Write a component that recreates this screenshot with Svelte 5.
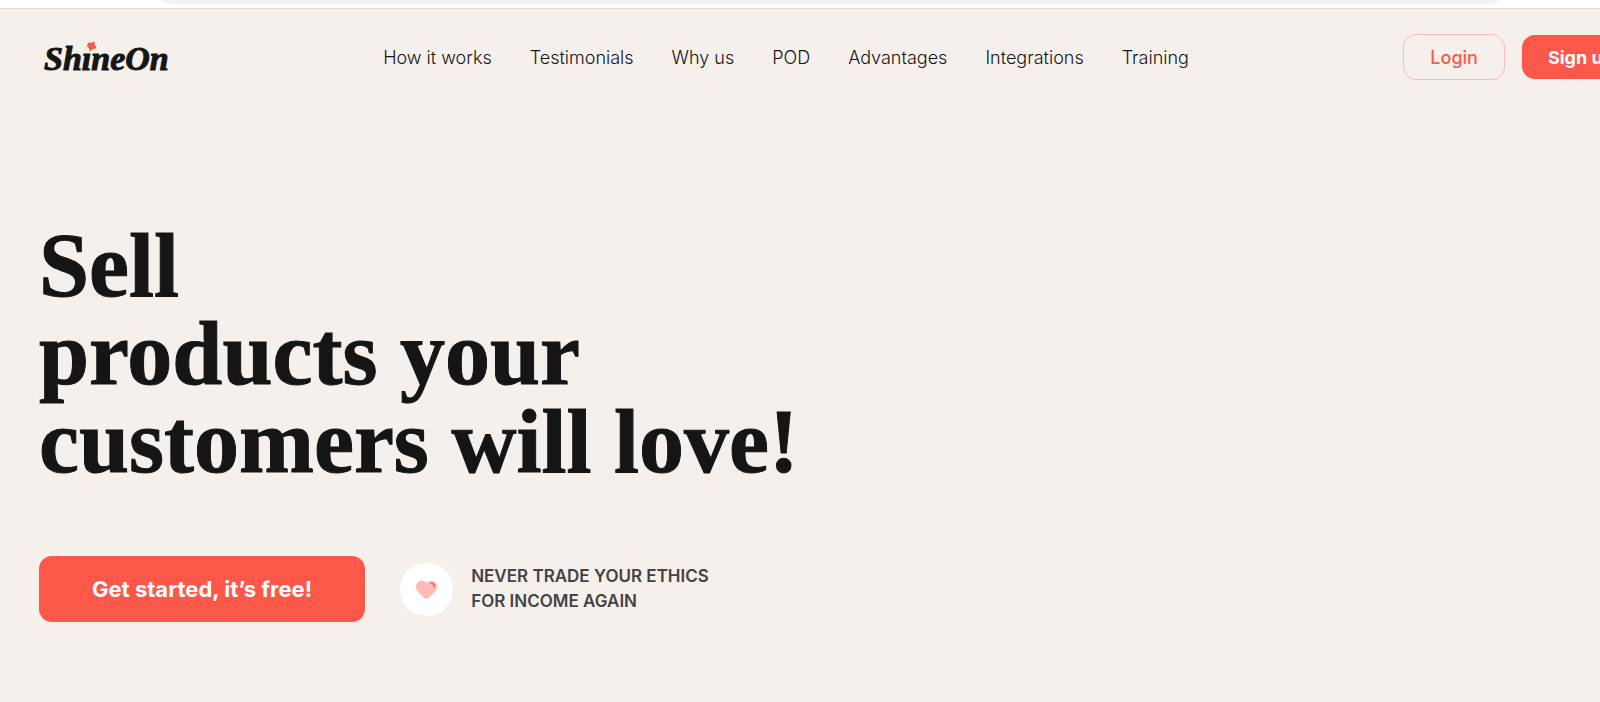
<script lang="ts">
	const links = [
		{ label: "How it works", href: "#how-it-works" },
		{ label: "Testimonials", href: "#testimonials" },
		{ label: "Why us", href: "#why-us" },
		{ label: "POD", href: "#pod" },
		{ label: "Advantages", href: "#advantages" },
		{ label: "Integrations", href: "#integrations" },
		{ label: "Training", href: "#training" },
	];
</script>

<div class="page">
	<div class="browser-edge">
		<div class="address-bar"></div>
	</div>

	<header class="header">
		<a class="logo" href="#home">
			<span>ShineOn</span>
			<svg class="spark" viewBox="0 0 12 12" aria-hidden="true">
				<ellipse cx="5" cy="7" rx="5" ry="4" fill="#f5f0ec" />
				<path d="M2.6 1.4 Q6 2.4 8.6 .2 Q8.4 3.6 11 6.8 Q7.4 6.8 4.2 9.8 Q4.6 6.4 1.4 4.6 Q3 3.4 2.6 1.4Z" fill="#fb584a" />
			</svg>
		</a>
		<nav class="nav">
			{#each links as link}
				<a href={link.href}>{link.label}</a>
			{/each}
		</nav>
		<div class="actions">
			<button class="login">Login</button>
			<button class="signup">Sign up</button>
		</div>
	</header>

	<main class="hero">
		<h1>Sell<br />products your<br />customers will love!</h1>
		<div class="hero-row">
			<button class="cta">Get started, it’s free!</button>
			<div class="promise">
				<span class="heart">
					<svg viewBox="0 0 24 22" aria-hidden="true">
						<path
							d="M12 21 C11 21 10.2 20.4 9.4 19.7 L3.2 13.4 C.4 10.6 .1 6.4 2.4 3.9 C5 1.1 9.3 1.2 12 4 C14.7 1.2 19 1.1 21.6 3.9 C23.9 6.4 23.6 10.6 20.8 13.4 L14.6 19.7 C13.8 20.4 13 21 12 21Z"
							fill="#ffbbb5"
						/>
						<path d="M17 4.5 Q19.5 4.5 20.5 7.5" fill="none" stroke="#fb584a" stroke-width="1.6" stroke-linecap="round" />
					</svg>
				</span>
				<p>NEVER TRADE YOUR ETHICS<br />FOR INCOME AGAIN</p>
			</div>
		</div>
	</main>
</div>

<style>
	:global(body) {
		margin: 0;
		background: #f5f0ec;
	}

	.page {
		min-height: 100vh;
		overflow: hidden;
		background: #f5f0ec;
		color: #151515;
		font-family: Inter, "Open Sans", sans-serif;
	}

	.browser-edge {
		display: flex;
		align-items: flex-end;
		height: 8px;
		padding: 0 95px 0 154px;
		overflow: hidden;
		background: #fff;
		border-bottom: 1px solid #dcdcdc;
	}

	.address-bar {
		flex: 1;
		height: 34px;
		margin-bottom: 4px;
		background: #f0f2f5;
		border-radius: 17px;
	}

	.header {
		display: flex;
		justify-content: space-between;
		align-items: center;
		height: 96px;
		margin-right: -40px;
		padding-left: 44px;
	}

	.logo {
		position: relative;
		margin-top: 4px;
		color: #151515;
		font-family: "Liberation Serif", serif;
		font-size: 34px;
		font-style: italic;
		font-weight: 700;
		line-height: 40px;
		text-decoration: none;
		-webkit-text-stroke: 1px #151515;
	}

	.spark {
		position: absolute;
		top: 2px;
		left: 41px;
		width: 13px;
		height: 13px;
		overflow: visible;
	}

	.nav {
		display: flex;
		gap: 38px;
	}

	.nav a {
		color: #151515;
		font-size: 18px;
		font-weight: 300;
		text-decoration: none;
		white-space: nowrap;
	}

	button {
		font-family: inherit;
		white-space: nowrap;
		cursor: pointer;
	}

	.actions {
		display: flex;
		align-items: center;
		gap: 17px;
	}

	.login,
	.signup {
		padding: 0 26px;
		border-radius: 13px;
		font-size: 18px;
	}

	.login {
		height: 46px;
		border: 1px solid #ffbbb5;
		background: transparent;
		color: #fb584a;
		font-weight: 500;
	}

	.signup {
		height: 44px;
		border: none;
		background: #fb584a;
		color: #fff;
		font-weight: 700;
	}

	.hero {
		padding: 117px 39px 72px;
	}

	h1 {
		margin: 0;
		font-family: "Liberation Serif", serif;
		font-size: 90px;
		font-weight: 700;
		line-height: 88px;
		-webkit-text-stroke: 1px #151515;
	}

	.hero-row {
		display: flex;
		align-items: center;
		gap: 35px;
		margin-top: 70px;
	}

	.cta {
		height: 66px;
		padding: 0 53px;
		border: none;
		border-radius: 13px;
		background: #fb584a;
		color: #fff;
		font-size: 22px;
		font-weight: 700;
	}

	.promise {
		display: flex;
		align-items: center;
		gap: 18px;
	}

	.heart {
		display: flex;
		align-items: center;
		justify-content: center;
		width: 53px;
		height: 53px;
		border-radius: 50%;
		background: #fff;
	}

	.heart svg {
		width: 23px;
		height: 21px;
	}

	.promise p {
		margin: 0;
		color: #454341;
		font-size: 17px;
		font-weight: 600;
		line-height: 25px;
	}
</style>
